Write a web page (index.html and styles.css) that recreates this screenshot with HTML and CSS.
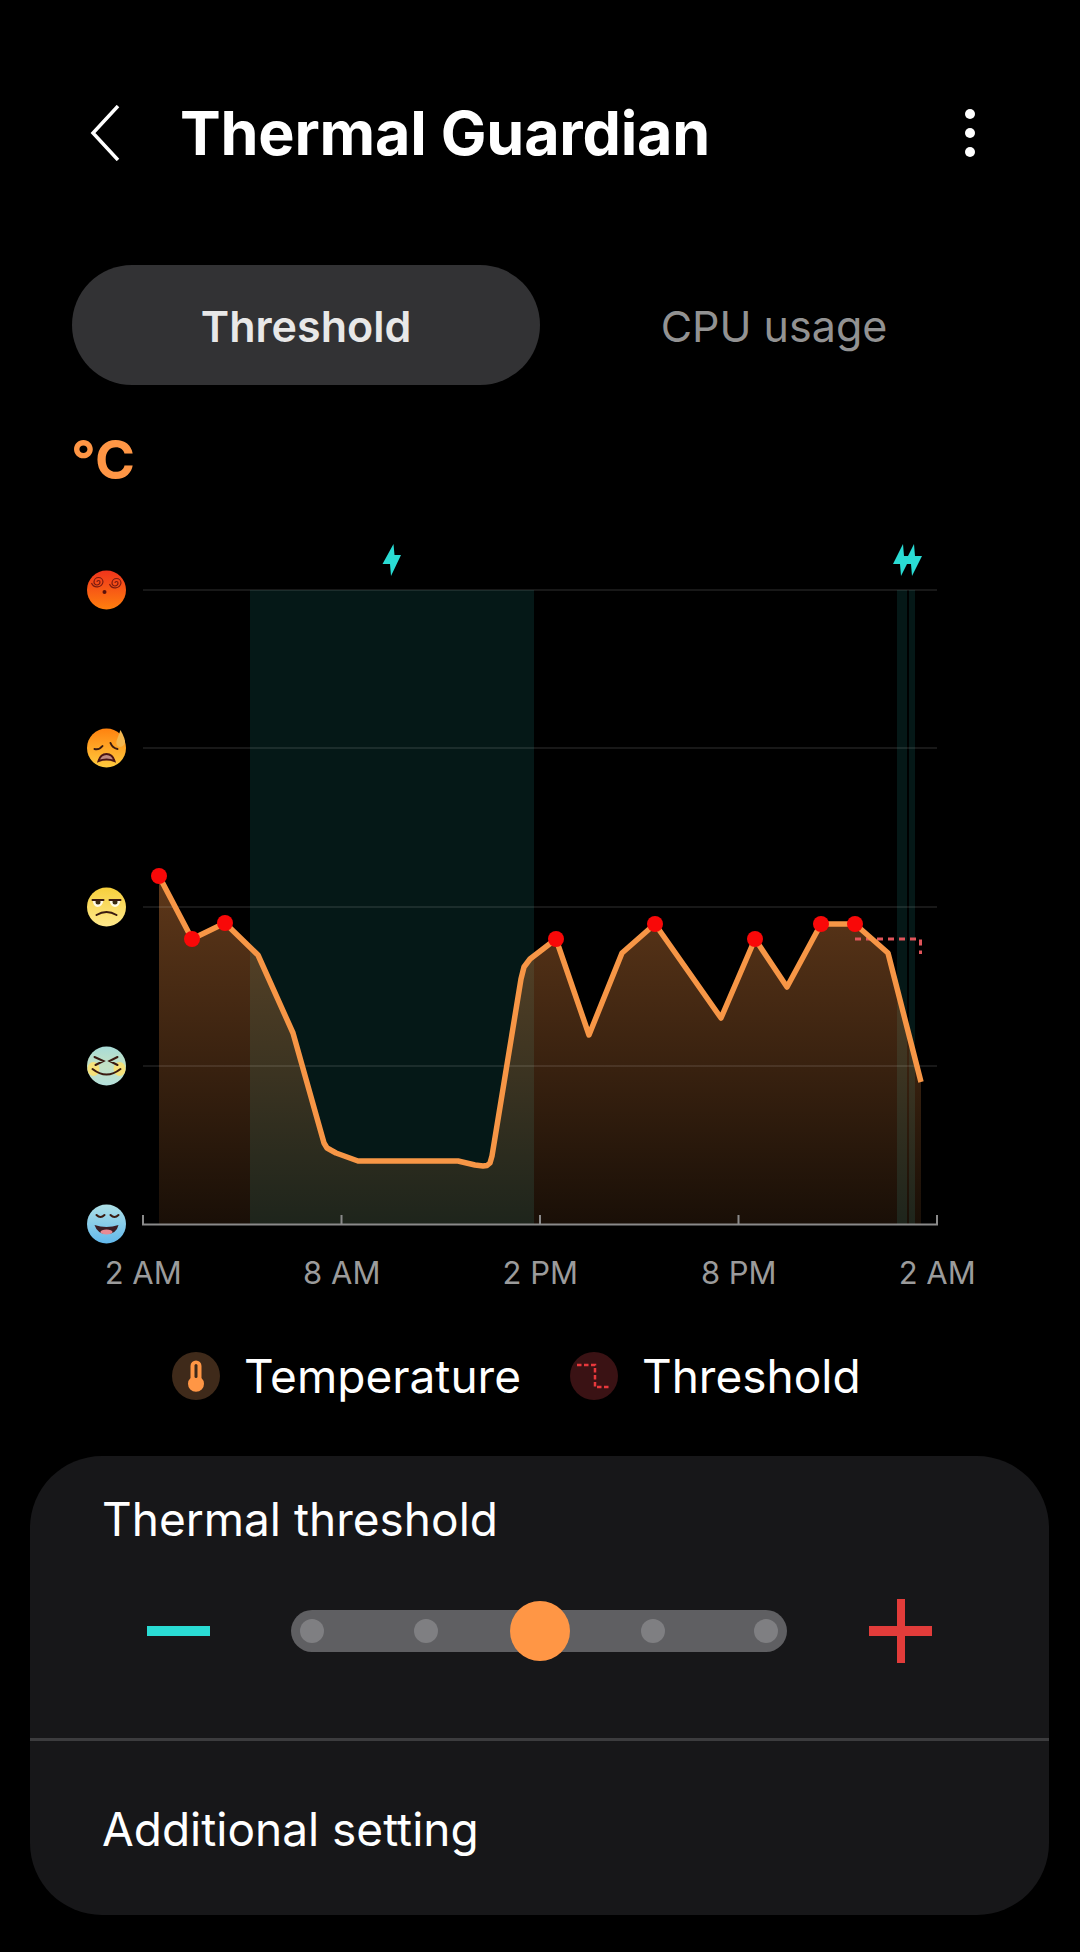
FILE: index.html
```html
<!DOCTYPE html>
<html lang="en">
  <head>
    <meta charset="utf-8" />
    <title>Thermal Guardian</title>
    <link rel="stylesheet" href="styles.css">
  </head>

  <body>
    <div class="header">
      <svg class="back" viewBox="0 0 30 56"><path d="M28 1 L3 28 L28 55" /></svg>
      <h1 class="title">Thermal Guardian</h1>
      <div class="more"><span></span><span></span><span></span></div>
    </div>

    <div class="tabs">
      <div class="tab active">Threshold</div>
      <div class="tab">CPU usage</div>
    </div>

    <div class="unit">°C</div>

    <!-- viewBox uses page coordinates so points can be read straight off the screen -->
    <svg class="chart" viewBox="72 530 936 716">
      <defs>
        <linearGradient id="area" gradientUnits="userSpaceOnUse" x1="0" y1="875" x2="0" y2="1223">
          <stop offset="0" stop-color="#ff9645" stop-opacity="0.37" />
          <stop offset="1" stop-color="#ff9645" stop-opacity="0.1" />
        </linearGradient>
        <linearGradient id="face1" x1="0" y1="0" x2="0" y2="1">
          <stop offset="0" stop-color="#f0341c" />
          <stop offset="1" stop-color="#ff7f0e" />
        </linearGradient>
        <linearGradient id="face2" x1="0" y1="0" x2="0" y2="1">
          <stop offset="0" stop-color="#ff820f" />
          <stop offset="1" stop-color="#ffcb3e" />
        </linearGradient>
        <linearGradient id="face3" x1="0" y1="0" x2="0" y2="1">
          <stop offset="0" stop-color="#f6cf3c" />
          <stop offset="1" stop-color="#ffe98c" />
        </linearGradient>
        <linearGradient id="face4" x1="0" y1="0" x2="0" y2="1">
          <stop offset="0" stop-color="#a8dcd8" />
          <stop offset="0.5" stop-color="#c4e2c4" />
          <stop offset="1" stop-color="#b4e0dc" />
        </linearGradient>
        <linearGradient id="face5" x1="0" y1="0" x2="0" y2="1">
          <stop offset="0" stop-color="#aee0e6" />
          <stop offset="1" stop-color="#62b8ec" />
        </linearGradient>
      </defs>

      <!-- charging periods -->
      <rect class="band" x="250" y="589" width="284" height="634" />
      <rect class="band" x="897" y="589" width="10" height="634" />
      <rect class="band" x="909" y="589" width="6" height="634" />

      <polygon class="bolt" points="393.5,543 382.5,563 390,563 391,575 401,554 394.5,554" />
      <polygon class="bolt" points="903,543 893,563 900,563 901,575 911,555 904,555" />
      <polygon class="bolt" points="914,543 904,563 911,563 912,575 922,555 915,555" />

      <polygon class="area" points="159,875 192,938 225,922 258,954 293,1032 324,1142 327,1147 336,1152 358,1160 458,1160 475,1164 483,1165 487,1164.500 490,1162 492,1155 521,978 524,966 530,958 556,938 589,1034 622,952 655,923 721,1017 755,938 787,986 821,923 855,923 888,952 921,1081 921,1223 159,1223" />

      <line class="grid" x1="143" y1="589" x2="937" y2="589" />
      <line class="grid" x1="143" y1="747" x2="937" y2="747" />
      <line class="grid" x1="143" y1="906" x2="937" y2="906" />
      <line class="grid" x1="143" y1="1065" x2="937" y2="1065" />
      <path class="axis" d="M143 1214 V1223.5 H937 V1214 M341.500 1214 V1223 M540 1214 V1223 M738.500 1214 V1223" />

      <path class="limit" d="M855 938 H920.500 V953" />
      <polyline class="temp" points="159,875 192,938 225,922 258,954 293,1032 324,1142 327,1147 336,1152 358,1160 458,1160 475,1164 483,1165 487,1164.500 490,1162 492,1155 521,978 524,966 530,958 556,938 589,1034 622,952 655,923 721,1017 755,938 787,986 821,923 855,923 888,952 921,1081" />

      <circle class="peak" cx="159" cy="875" r="8" />
      <circle class="peak" cx="192" cy="938" r="8" />
      <circle class="peak" cx="225" cy="922" r="8" />
      <circle class="peak" cx="556" cy="938" r="8" />
      <circle class="peak" cx="655" cy="923" r="8" />
      <circle class="peak" cx="755" cy="938" r="8" />
      <circle class="peak" cx="821" cy="923" r="8" />
      <circle class="peak" cx="855" cy="923" r="8" />

      <!-- dizzy -->
      <g transform="translate(106.500 589)">
        <circle r="19.500" fill="url(#face1)" />
        <path class="ink-red" transform="translate(-9 -8)" d="M-0.500 0 A1.500 1.500 0 0 1 2.500 0 A3 3 0 0 1 -3.500 0 A4.500 4.500 0 0 1 5.500 0 A6 6 0 0 1 -6 1" />
        <path class="ink-red" transform="translate(9 -7)" d="M-0.500 0 A1.500 1.500 0 0 1 2.500 0 A3 3 0 0 1 -3.500 0 A4.500 4.500 0 0 1 5.500 0 A6 6 0 0 1 -6 1" />
        <circle cx="-2" cy="2" r="2" fill="#5a120c" />
      </g>
      <!-- hot, sweating -->
      <g transform="translate(106.500 747)">
        <circle r="19.500" fill="url(#face2)" />
        <path class="ink" d="M-12 1 Q-7 2 -4 -2 M4 -5 Q6 0 11 1" />
        <path d="M-8 13 Q-6 6 0 6 Q6 6 8 13 Q0 10 -8 13 Z" fill="#c08a80" stroke="#4a1414" stroke-width="2" />
        <path d="M14 -18 Q19 -9 18.500 -5 Q17 -1 13 -1 Q9 -2 10 -7 Z" fill="#f4b750" />
      </g>
      <!-- unamused -->
      <g transform="translate(106.500 906)">
        <circle r="19.500" fill="url(#face3)" />
        <path d="M-14 -7 H-3 Q-4 0 -9 0 Q-13 0 -14 -7 Z" fill="#fffbe6" />
        <path d="M3 -7 H14 Q13 0 8.500 0 Q4 0 3 -7 Z" fill="#fffbe6" />
        <circle cx="-8.500" cy="-5" r="2.500" fill="#3a2a10" />
        <circle cx="8.500" cy="-5" r="2.500" fill="#3a2a10" />
        <path class="ink" d="M-14 -7 H-3 M3 -7 H14" />
        <path class="ink" d="M-10 8 Q0 2 10 8" />
      </g>
      <!-- laughing -->
      <g transform="translate(106.500 1065)">
        <ellipse rx="19.500" ry="19.500" fill="url(#face4)" />
        <ellipse cx="-13" cy="3" rx="6" ry="7" fill="#f6e27a" />
        <ellipse cx="13" cy="3" rx="6" ry="7" fill="#f6e27a" />
        <path class="ink" d="M-12 -9 L-3 -5 L-11 -1 M11 -9 L3 -5 L11 -1" />
        <path class="ink" d="M-14 3 Q0 14 14 3" />
      </g>
      <!-- relaxed -->
      <g transform="translate(106.500 1223)">
        <circle r="19.500" fill="url(#face5)" />
        <path class="ink" d="M-10 -9 Q-6 -5 -2 -9 M4 -9 Q8 -5 12 -9" />
        <path d="M-12 1 Q0 5 12 1 Q10 10 0 10 Q-9 10 -12 1 Z" fill="#3a1c24" />
        <ellipse cx="0" cy="8" rx="6" ry="2.500" fill="#e88a94" />
      </g>
    </svg>

    <div class="hours">
      <span>2 AM</span>
      <span>8 AM</span>
      <span>2 PM</span>
      <span>8 PM</span>
      <span>2 AM</span>
    </div>

    <div class="legend">
      <div class="legend-item">
        <svg class="legend-icon" viewBox="0 0 48 48">
          <circle class="dot-temp" cx="24" cy="24" r="24" />
          <path class="thermo" d="M18.500 14 a5.500 5.500 0 0 1 11 0 V26 a8 8 0 1 1 -11 0 Z" />
          <rect class="thermo-slit" x="22.500" y="12" width="3" height="14" rx="1.500" />
        </svg>
        Temperature
      </div>
      <div class="legend-item">
        <svg class="legend-icon" viewBox="0 0 48 48">
          <circle class="dot-limit" cx="24" cy="24" r="24" />
          <path class="limit-small" d="M7 13 H25 V35 H41" />
        </svg>
        Threshold
      </div>
    </div>

    <div class="card">
      <div class="card-top">
        <div class="card-label">Thermal threshold</div>
        <div class="slider-row">
          <svg class="step" viewBox="0 0 63 64"><rect class="minus" x="0" y="27" width="63" height="10" /></svg>
          <div class="track">
            <span class="stop"></span>
            <span class="stop"></span>
            <span class="stop"></span>
            <span class="stop"></span>
            <span class="stop"></span>
            <span class="thumb"></span>
          </div>
          <svg class="step" viewBox="0 0 63 64"><path class="plus" d="M0 27 H28 V0 H36 V27 H63 V37 H36 V64 H28 V37 H0 Z" /></svg>
        </div>
      </div>
      <div class="card-row">Additional setting</div>
    </div>
  </body>
</html>
```

FILE: styles.css
```css
html,
body {
  margin: 0;
  padding: 0;
}

body {
  width: 1080px;
  height: 1952px;
  overflow: hidden;
  background-color: #000;
  color: #fff;
  font-family: Inter, "Noto Sans", sans-serif;
}

.header {
  display: flex;
  align-items: center;
  height: 74px;
  padding: 96px 105px 0 90px;
}

.back {
  width: 30px;
  height: 56px;
  fill: none;
  stroke: #fff;
  stroke-width: 3.5;
}

.title {
  flex: 1;
  margin: 0 0 0 60px;
  font-size: 61px;
  font-weight: 700;
  letter-spacing: -0.2px;
}

.more {
  display: flex;
  flex-direction: column;
  gap: 9px;
}

.more span {
  width: 10px;
  height: 10px;
  border-radius: 50%;
  background-color: #fff;
}

.tabs {
  display: flex;
  margin: 95px 72px 0;
}

.tab {
  width: 468px;
  height: 120px;
  line-height: 122px;
  border-radius: 60px;
  text-align: center;
  font-size: 43px;
  color: #929292;
}

.tab.active {
  background-color: #323234;
  color: #e8e8e8;
  font-weight: 600;
}

.unit {
  margin: 44px 0 0 71px;
  height: 62px;
  line-height: 62px;
  font-size: 54px;
  font-weight: 700;
  color: #ff9645;
}

.chart {
  display: block;
  width: 936px;
  height: 716px;
  margin: 40px 0 0 72px;
}

.band {
  fill: #2adcd4;
  fill-opacity: 0.11;
}

.bolt {
  fill: #2adcd4;
}

.area {
  fill: url(#area);
}

.grid {
  stroke: #fff;
  stroke-opacity: 0.13;
  stroke-width: 1.5;
}

.axis {
  fill: none;
  stroke: #8a8a8a;
  stroke-width: 2;
}

.limit {
  fill: none;
  stroke: #e0555a;
  stroke-width: 3;
  stroke-dasharray: 6 5;
}

.temp {
  fill: none;
  stroke: #f79646;
  stroke-width: 5.500;
  stroke-linejoin: round;
}

.peak {
  fill: #f90808;
}

.ink {
  fill: none;
  stroke: #3a1a10;
  stroke-width: 2;
  stroke-linecap: round;
}

.ink-red {
  fill: none;
  stroke: #7a1a10;
  stroke-width: 1.2;
}

.hours {
  display: flex;
  margin: 6px 0 0 44px;
  font-size: 31px;
  line-height: 40px;
  color: #9b9b9b;
}

.hours span {
  width: 198.500px;
  text-align: center;
}

.legend {
  display: flex;
  gap: 49px;
  margin: 53px 0 0 172px;
}

.legend-item {
  display: flex;
  align-items: center;
  gap: 24px;
  font-size: 46px;
  line-height: 60px;
}

.legend-icon {
  width: 48px;
  height: 48px;
}

.dot-temp {
  fill: #3f2a1a;
}

.dot-limit {
  fill: #3a1214;
}

.thermo {
  fill: #ff9645;
}

.thermo-slit {
  fill: #3f2a1a;
}

.limit-small {
  fill: none;
  stroke: #e8383c;
  stroke-width: 2.500;
  stroke-dasharray: 4.500 2.500;
}

.card {
  margin: 50px 31px 0 30px;
  height: 459px;
  border-radius: 72px;
  background-color: #171719;
}

.card-top {
  height: 282px;
  border-bottom: 3px solid #3c3c3e;
}

.card-label,
.card-row {
  padding-left: 72px;
  font-size: 46px;
  line-height: 60px;
}

.card-label {
  padding-top: 33px;
}

.card-row {
  padding-top: 58px;
}

.slider-row {
  display: flex;
  align-items: center;
  margin-top: 50px;
  padding-left: 117px;
}

.step {
  width: 63px;
  height: 64px;
}

.minus {
  fill: #2adcd4;
}

.plus {
  fill: #e23c3a;
}

.track {
  position: relative;
  display: flex;
  align-items: center;
  justify-content: space-between;
  box-sizing: border-box;
  width: 496px;
  height: 42px;
  margin: 0 82px 0 81px;
  padding: 0 9px;
  border-radius: 21px;
  background-color: #5f5f62;
}

.stop {
  width: 24px;
  height: 24px;
  border-radius: 50%;
  background-color: #7f7f82;
}

.thumb {
  position: absolute;
  left: 219px;
  top: -9px;
  width: 60px;
  height: 60px;
  border-radius: 50%;
  background-color: #ff9645;
}
```
